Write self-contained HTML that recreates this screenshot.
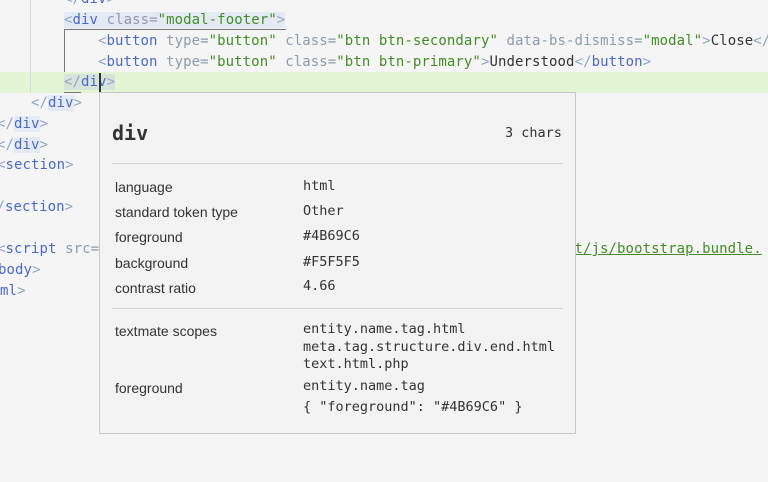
<!DOCTYPE html>
<html><head><meta charset="utf-8"><style>
body{margin:0;width:768px;height:482px;overflow:hidden;background:#f5f5f5;position:relative;font-family:"DejaVu Sans Mono","Liberation Mono",monospace;}
.l{position:absolute;left:0;height:21px;line-height:21px;font-size:14px;letter-spacing:0.08px;white-space:pre;color:#333;}
.t{color:#4b69c6}.p{color:#91a3c9}.a{color:#8e9bab}.s{color:#448c27}
.hl{background:#e3eaf3}
.tip{position:absolute;left:99px;top:92px;width:477px;height:342px;background:#f3f3f3;border:1px solid #c8c8c8;box-sizing:border-box;color:#333;}
.tip div{position:absolute;white-space:pre;}
.lb{font-family:"Liberation Sans",sans-serif;font-size:14px;left:15px;}
.v{font-family:"DejaVu Sans Mono","Liberation Mono",monospace;font-size:13.5px;left:203px;}
.sep{height:1px;background:#d4d4d4;left:12px;width:451px;}
</style></head><body>
<div style="position:absolute;left:0;top:72px;width:768px;height:21px;background:#e4f5d6"></div>
<div style="position:absolute;left:30px;top:0;width:1px;height:92px;background:#d8d8d8"></div>
<div style="position:absolute;left:64px;top:29px;width:1px;height:43px;background:#777"></div>
<div style="position:absolute;left:64px;top:29px;width:222px;height:1px;background:#777"></div>
<div style="position:absolute;left:64px;top:92px;width:17px;height:1px;background:#777"></div>
<div class="l" style="top:-11px;left:64px"><span class="p">&lt;/</span><span class="t">div</span><span class="p">&gt;</span></div>
<div class="l" style="top:10px;left:64px"><span class="hl"><span class="p">&lt;</span><span class="t">div</span> <span class="a">class</span><span class="a">=</span><span class="s">"modal-footer"</span><span class="p">&gt;</span></span></div>
<div class="l" style="top:31px;left:98px"><span class="p">&lt;</span><span class="t">button</span> <span class="a">type=</span><span class="s">"button"</span> <span class="a">class=</span><span class="s">"btn btn-secondary"</span> <span class="a">data-bs-dismiss=</span><span class="s">"modal"</span><span class="p">&gt;</span>Close<span class="p">&lt;/</span></div>
<div class="l" style="top:52px;left:98px"><span class="p">&lt;</span><span class="t">button</span> <span class="a">type=</span><span class="s">"button"</span> <span class="a">class=</span><span class="s">"btn btn-primary"</span><span class="p">&gt;</span>Understood<span class="p">&lt;/</span><span class="t">button</span><span class="p">&gt;</span></div>
<div class="l" style="top:72px;left:64px"><span style="background:#d7e4dc"><span class="p">&lt;/</span><span class="t">div</span><span class="p">&gt;</span></span></div>
<div style="position:absolute;left:99px;top:73px;width:2px;height:19px;background:#333"></div>
<div class="l" style="top:93px;left:31px"><span class="p">&lt;/</span><span class="t hl">div</span><span class="p">&gt;</span></div>
<div class="l" style="top:114px;left:-3px"><span class="p">&lt;/</span><span class="t hl">div</span><span class="p">&gt;</span></div>
<div class="l" style="top:135px;left:-3px"><span class="p">&lt;/</span><span class="t hl">div</span><span class="p">&gt;</span></div>
<div class="l" style="top:155px;left:-3px"><span class="p">&lt;</span><span class="t">section</span><span class="p">&gt;</span></div>
<div class="l" style="top:197px;left:-12px"><span class="p">&lt;/</span><span class="t">section</span><span class="p">&gt;</span></div>
<div class="l" style="top:239px;left:-3px"><span class="p">&lt;</span><span class="t">script</span> <span class="a">src=</span></div>
<div class="l" style="top:239px;left:566px"><span class="s" style="text-decoration:underline">st/js/bootstrap.bundle.</span></div>
<div class="l" style="top:260px;left:-19px"><span class="p">&lt;/</span><span class="t">body</span><span class="p">&gt;</span></div>
<div class="l" style="top:281px;left:-34px"><span class="p">&lt;/</span><span class="t">html</span><span class="p">&gt;</span></div>
<div class="tip">
<div style="left:12px;top:28px;font-size:20px;font-weight:bold;font-family:'DejaVu Sans Mono',monospace;">div</div>
<div class="v" style="left:405px;top:32px;">3 chars</div>
<div class="sep" style="top:70px"></div>
<div class="lb" style="top:86px">language</div><div class="v" style="top:85px">html</div>
<div class="lb" style="top:111px">standard token type</div><div class="v" style="top:110px">Other</div>
<div class="lb" style="top:136px">foreground</div><div class="v" style="top:135px">#4B69C6</div>
<div class="lb" style="top:162px">background</div><div class="v" style="top:161px">#F5F5F5</div>
<div class="lb" style="top:187px">contrast ratio</div><div class="v" style="top:185px">4.66</div>
<div class="sep" style="top:215px"></div>
<div class="lb" style="top:230px">textmate scopes</div>
<div class="v" style="top:228px;line-height:17.5px">entity.name.tag.html
meta.tag.structure.div.end.html
text.html.php</div>
<div class="lb" style="top:287px">foreground</div><div class="v" style="top:285px">entity.name.tag</div>
<div class="v" style="top:306px">{ "foreground": "#4B69C6" }</div>
</div>
</body></html>
